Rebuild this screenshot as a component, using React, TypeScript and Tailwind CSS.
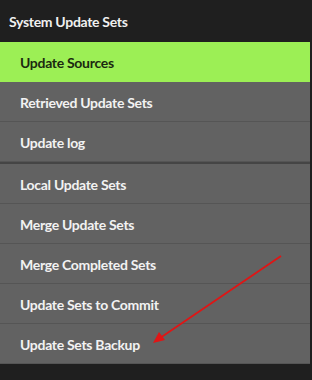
import React from "react";

const groupA = ["Retrieved Update Sets", "Update log"];
const groupB = [
  "Local Update Sets",
  "Merge Update Sets",
  "Merge Completed Sets",
  "Update Sets to Commit",
  "Update Sets Backup",
];

function Row({ label }: { label: string }) {
  return (
    <div className="h-[40px] flex items-center pl-[20px] pt-[1px] bg-[#626262] border-b border-[#555555] text-[#f2f2f2] text-[14px] font-bold tracking-[-0.3px]">
      {label}
    </div>
  );
}

export default function App() {
  return (
    <div
      className="relative w-[312px] h-[380px] bg-[#1f1f1f] overflow-hidden"
      style={{ fontFamily: "Lato, 'Liberation Sans', sans-serif" }}
    >
      <div className="w-[310px] flex flex-col">
        <div className="h-[42px] flex items-center pl-[9px] text-[#f0f0f0] text-[14px] font-bold tracking-[-0.3px]">
          System Update Sets
        </div>
        <div className="h-[40px] flex items-center pl-[20px] pt-[1px] bg-[#9cef55] text-[#1b2a10] text-[14px] font-bold tracking-[-0.3px]">
          Update Sources
        </div>
        {groupA.map((l) => (
          <Row key={l} label={l} />
        ))}
        <div className="h-[2px] bg-[#454545]" />
        {groupB.map((l) => (
          <Row key={l} label={l} />
        ))}
      </div>
      <svg className="absolute left-0 top-0" width="312" height="380" viewBox="0 0 312 380">
        <line x1="281" y1="256" x2="160" y2="338" stroke="#e01515" strokeWidth="1.8" />
        <polygon points="153,343 159,332 165,340" fill="#e01515" />
      </svg>
    </div>
  );
}
